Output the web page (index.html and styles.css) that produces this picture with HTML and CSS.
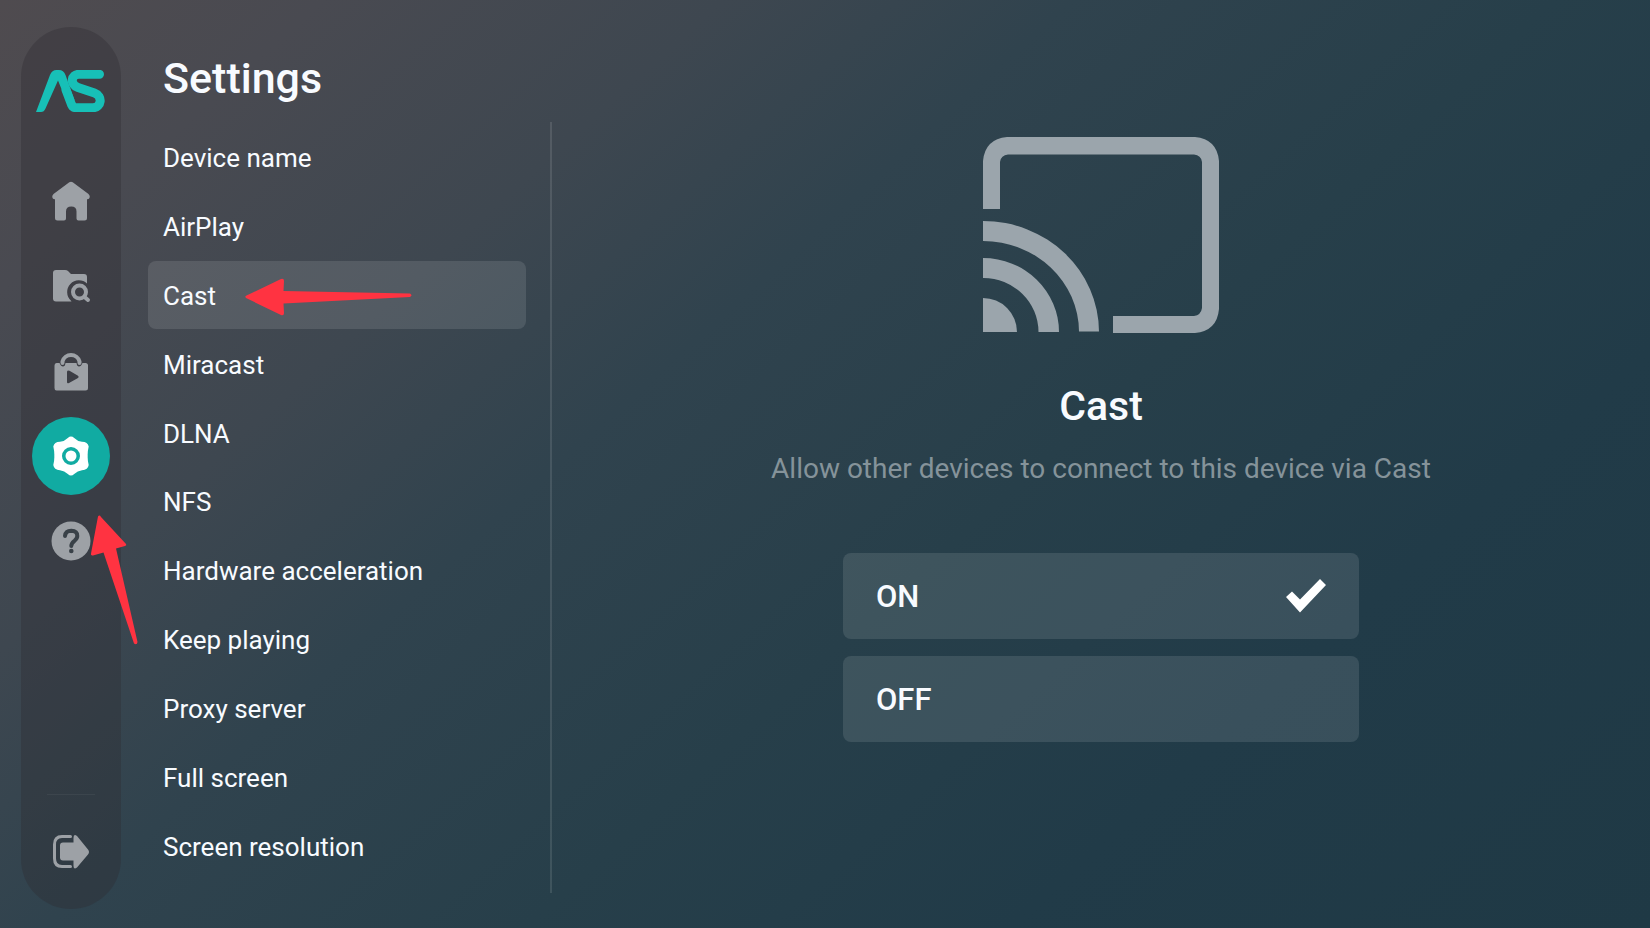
FILE: index.html
```html
<!DOCTYPE html>
<html lang="en">
<head>
    <meta charset="UTF-8">
    <meta name="viewport" content="width=device-width, initial-scale=1.0">
    <title>Settings</title>
    <link rel="stylesheet" href="styles.css">
</head>
<body>
    <aside class="sidebar">
        <svg class="logo" viewBox="0 0 70 42" role="img" aria-label="AS">
            <path class="fill" d="M0 42 L14 5 Q16 0 20.500 0 H23 Q27.500 0 29.500 5 L38.500 30 L34 40 L22 10.500 L9.500 38.500 Q8 42 5 42 Z"/>
            <path d="M63.500 4.300 H43 C35 4.300 33.500 14.500 42 17.500 L58.500 23 C67 26 65.500 37.700 57 37.700 H40 Q37 37.700 35.500 34.500 L30 20"/>
        </svg>
        <nav class="nav">
            <a href="#home" class="nav-item" aria-label="Home">
                <svg viewBox="0 0 40 40"><path d="M18.300 1.300 Q20 0 21.700 1.300 L37.500 13 Q39.500 15 38.500 17 Q37.500 18.500 36 18.300 V37 Q36 39.500 33.500 39.500 H27.500 Q25.500 39.500 25.500 37.500 V30.500 Q25.500 25.500 20.300 25.500 Q15 25.500 15 30.500 V37.500 Q15 39.500 13 39.500 H6.500 Q4 39.500 4 37 V18.300 Q2.500 18.500 1.500 17 Q.5 15 2.500 13 Z"/></svg>
            </a>
            <a href="#files" class="nav-item" aria-label="Files">
                <svg viewBox="0 0 40 40"><path d="M5 4 H14 Q16 4 17 5 L20 8 H33 Q36 8 36 11 V17.500 A11.500 11.500 0 0 0 19.800 34.500 L20.500 35.500 H5 Q2 35.500 2 32.500 V7 Q2 4 5 4 Z"/><circle class="line" cx="28.500" cy="26" r="6.500"/><path class="line" d="M33.500 31 L37 34"/></svg>
            </a>
            <a href="#store" class="nav-item" aria-label="Store">
                <svg viewBox="0 0 40 40"><path class="line" d="M11.500 12 V10.500 A8.800 8.800 0 0 1 28.500 10.500 V12"/><path fill-rule="evenodd" d="M5.500 12 H8.500 Q10 15.500 12 15.500 Q14 15.500 14.500 12 H25.500 Q26 15.500 28 15.500 Q30 15.500 31.500 12 H34.500 Q37 12 37 14.500 V37 Q37 39.500 34.500 39.500 H5.500 Q3.500 39.500 3.500 37 V14.500 Q3.500 12 5.500 12 Z M17 19.500 Q16 19.500 16 21 V31 Q16 33 18 32 L27 27 Q28.500 26 27 24.800 L18.500 19.700 Z"/></svg>
            </a>
            <a href="#settings" class="nav-item active" aria-label="Settings" aria-current="page">
                <svg viewBox="0 0 40 40"><path fill-rule="evenodd" d="M16.800 1.900 Q20 -1 23.200 1.900 Q26.500 5.200 31 5.800 Q36.800 6 37.700 10.500 Q36.500 15.500 36.700 20 Q36.500 24.500 37.700 29 Q37 33.800 31 34.200 Q26.500 34.800 23.200 38 Q20 41 16.800 38 Q13.500 34.800 9 34.200 Q3 33.800 2.300 29 Q3.500 24.500 3.300 20 Q3.500 15.500 2.300 10.500 Q3.200 6 9 5.800 Q13.500 5.200 16.800 1.900 Z M20 11 A9 9 0 1 0 20 29 A9 9 0 1 0 20 11 Z"/><circle cx="20" cy="20" r="5.500"/></svg>
            </a>
            <a href="#help" class="nav-item" aria-label="Help">
                <svg viewBox="0 0 40 40"><circle cx="20" cy="20" r="19.500"/><path class="mark" d="M14 15 Q14.500 9.800 20.300 9.800 Q26.300 10 26.300 15 Q26.300 17.500 23.500 19.800 Q20.300 22.200 20.300 25"/><circle class="dot" cx="20.300" cy="30" r="2.300"/></svg>
            </a>
            <svg class="arrow arrow-up" viewBox="0 0 48 132"><path d="M9 2.500 Q10.500 .5 12 3 L37 30 Q38 31.500 36 32 L27 34.500 L48.500 128 Q48 131.500 45 129.500 L14.500 38.500 L4 41.500 Q1.500 42 2 39.500 Z"/></svg>
        </nav>
        <div class="sidebar-footer">
            <a href="#exit" class="nav-item" aria-label="Exit">
                <svg viewBox="0 0 40 40"><path class="thin" d="M19.500 4.500 H11 Q3.500 4.500 3.500 12.500 V26.500 Q3.500 34.500 11 34.500 H19.500"/><path d="M12 10.500 H22.500 V6 Q22.500 1.500 26 4 L37 17.500 Q39 20 37 22.500 L26 35.500 Q22.500 38 22.500 34 V28.500 H12 Q9 28.500 9 25.500 V13.500 Q9 10.500 12 10.500 Z"/></svg>
            </a>
        </div>
    </aside>

    <section class="settings">
        <h1>Settings</h1>
        <ul class="menu">
            <li><a href="#device-name">Device name</a></li>
            <li><a href="#airplay">AirPlay</a></li>
            <li>
                <a href="#cast" class="selected">Cast</a>
                <svg class="arrow arrow-left" viewBox="0 0 168 38"><path d="M1 20 Q-.5 18.500 1.500 17.500 L36 1 Q39 0 39 3 L38.500 13 L165 15.500 Q168 17.300 165 19 L38.500 25.500 L39 35 Q39 38 36 37 Z"/></svg>
            </li>
            <li><a href="#miracast">Miracast</a></li>
            <li><a href="#dlna">DLNA</a></li>
            <li><a href="#nfs">NFS</a></li>
            <li><a href="#hardware">Hardware acceleration</a></li>
            <li><a href="#keep-playing">Keep playing</a></li>
            <li><a href="#proxy">Proxy server</a></li>
            <li><a href="#full-screen">Full screen</a></li>
            <li><a href="#resolution">Screen resolution</a></li>
        </ul>
    </section>

    <main class="detail">
        <svg class="cast-icon" viewBox="0 0 236 196">
            <path d="M0 72 V24 Q2 2 24 0 H212 Q234 2 236 24 V172 Q234 194 212 196 H130 V179 H211 Q218 178 219 171 V25 Q218 18 211 17.500 H25 Q18 18 17 25 V72 Z"/>
            <path d="M0 84 A116 111 0 0 1 116 194.500 H96 A96 91 0 0 0 0 104 Z"/>
            <path d="M0 121 A76 74 0 0 1 76 195 H55.500 A55 54 0 0 0 0 141 Z"/>
            <path d="M0 161 A34 34 0 0 1 34 195 H0 Z"/>
        </svg>
        <h2>Cast</h2>
        <p>Allow other devices to connect to this device via Cast</p>
        <form class="options">
            <label class="option">
                <input type="radio" name="cast" value="on" checked>
                <span>ON</span>
                <svg class="check" viewBox="0 0 40 34"><path d="M0 18 L6 12.500 L14 20.500 L34 0 L40 6 L14 33.500 Z"/></svg>
            </label>
            <label class="option">
                <input type="radio" name="cast" value="off">
                <span>OFF</span>
                <svg class="check" viewBox="0 0 40 34"><path d="M0 18 L6 12.500 L14 20.500 L34 0 L40 6 L14 33.500 Z"/></svg>
            </label>
        </form>
    </main>
</body>
</html>
```
FILE: styles.css
```css
* { box-sizing: border-box; }
body { margin: 0; min-height: 100vh; display: flex; font-family: Roboto, "Liberation Sans", sans-serif; color: #f8fbff; background: linear-gradient(138deg, #4f4b4f 0%, #494a51 12%, #3e4750 27%, #30434e 40%, #273f4a 58%, #213b48 76%, #1f3945 100%); }
a { color: inherit; text-decoration: none; }
h1, h2, p, ul { margin: 0; padding: 0; font-weight: 400; }

/* sidebar */
.sidebar { flex: none; width: 100px; margin: 27px 0 19px 21px; padding: 43px 0 18px; border-radius: 50px; background: rgba(46, 44, 48, 0.35); display: flex; flex-direction: column; align-items: center; }
.logo { width: 70px; height: 42px; fill: none; stroke: #17c0b7; stroke-width: 9; stroke-linecap: round; }
.logo .fill { fill: #17c0b7; stroke: none; }
.nav { position: relative; margin-top: 50px; display: flex; flex-direction: column; gap: 7px; }
.nav-item { width: 78px; height: 78px; border-radius: 50%; display: flex; align-items: center; justify-content: center; }
.nav-item svg { width: 40px; height: 40px; fill: #9da1a6; }
.nav-item.active { background: #11aba2; }
.nav-item.active svg { fill: #fff; }
.nav-item .line { fill: none; stroke: #9da1a6; stroke-width: 4; stroke-linecap: round; }
.nav-item .thin { fill: none; stroke: #9da1a6; stroke-width: 3; stroke-linecap: round; }
.nav-item .mark { fill: none; stroke: #394148; stroke-width: 4; stroke-linecap: round; }
.nav-item .dot { fill: #394148; }
.sidebar-footer { margin-top: auto; display: flex; flex-direction: column; align-items: center; gap: 18px; }
.sidebar-footer::before { content: ""; width: 48px; height: 1px; background: rgba(255, 255, 255, 0.05); }

.arrow { position: absolute; fill: #ff3341; z-index: 1; overflow: visible; }
.arrow-up { width: 48px; height: 132px; left: 57px; top: 352px; }
.arrow-left { width: 168px; height: 38px; left: 97px; top: 17px; }

/* settings list */
.settings { flex: none; width: 431px; padding: 51px 26px 48px 27px; display: flex; flex-direction: column; position: relative; }
.settings::after { content: ""; position: absolute; right: 0; top: 122px; bottom: 35px; width: 2px; background: rgba(255, 255, 255, 0.11); }
h1 { padding-left: 15px; font-size: 43px; line-height: 54px; font-weight: 500; margin-bottom: 18px; }
.menu { flex: 1; list-style: none; display: flex; flex-direction: column; }
.menu li { flex: 1; position: relative; display: flex; }
.menu a { flex: 1; display: flex; align-items: center; padding: 2px 15px 0; font-size: 26px; line-height: 32px; border-radius: 8px; }
.menu .selected { background: rgba(255, 255, 255, 0.11); }

/* detail panel */
.detail { flex: 1; padding-top: 137px; display: flex; flex-direction: column; align-items: center; }
.cast-icon { width: 236px; height: 196px; fill: #9ba5ac; }
h2 { margin-top: 48px; font-size: 41px; line-height: 50px; font-weight: 500; }
.detail p { margin-top: 20px; font-size: 28px; line-height: 36px; color: #85939a; }
.options { width: 516px; max-width: 100%; margin-top: 66px; display: flex; flex-direction: column; gap: 17px; }
.option { height: 86px; padding: 0 33px; border-radius: 8px; background: rgba(255, 255, 255, 0.11); display: flex; align-items: center; justify-content: space-between; font-size: 31px; font-weight: 500; cursor: pointer; }
.option input { position: absolute; opacity: 0; margin: 0; }
.check { width: 40px; height: 34px; fill: #fff; visibility: hidden; }
.option input:checked ~ .check { visibility: visible; }
```
